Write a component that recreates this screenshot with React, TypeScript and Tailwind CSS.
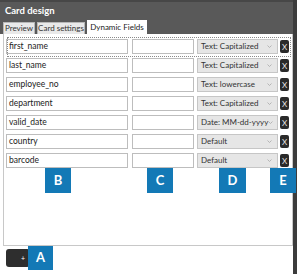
import React, { FC } from "react";

type Field = { name: string; format: string };

const fields: Field[] = [
  { name: "first_name", format: "Text: Capitalized" },
  { name: "last_name", format: "Text: Capitalized" },
  { name: "employee_no", format: "Text: lowercase" },
  { name: "department", format: "Text: Capitalized" },
  { name: "valid_date", format: "Date: MM-dd-yyyy" },
  { name: "country", format: "Default" },
  { name: "barcode", format: "Default" },
];

const Marker: FC<{ label: string; className: string }> = ({ label, className }) => (
  <div
    className={`absolute flex items-center justify-center bg-[#1379b6] text-white font-bold text-[13px] ${className}`}
  >
    {label}
  </div>
);

const FieldRow: FC<{ field: Field; focused?: boolean }> = ({ field, focused }) => (
  <div className="relative flex items-center h-[15px]">
    {focused && (
      <div className="absolute left-[1px] right-[1px] top-[-2px] bottom-[-3px] border border-dotted border-[#8a8a8a]" />
    )}
    <div className="w-[122px] h-[15px] border border-[#bdbdbd] bg-white px-[2px] text-[8.5px] leading-[13px] text-[#222] whitespace-nowrap">
      {field.name}
    </div>
    <div className="ml-[4px] w-[62px] h-[15px] border border-[#bdbdbd] bg-white" />
    <div className="ml-[3px] w-[81px] h-[15px] border border-[#c6c6c6] bg-[#e6e6e6] flex items-center justify-between pl-[3px] pr-[5px] text-[8px] text-[#333] whitespace-nowrap">
      <span className="leading-[13px]">{field.format}</span>
      <svg width="5" height="3" viewBox="0 0 5 3" className="shrink-0">
        <path d="M0.5 0.5 L2.5 2.5 L4.5 0.5" fill="none" stroke="#a8a8a8" strokeWidth="0.8" />
      </svg>
    </div>
    <div className="ml-[2px] w-[9px] h-[13px] rounded-[2px] bg-[#2a2a2a] flex items-center justify-center text-[8px] leading-none text-[#e8e8e8]">
      X
    </div>
  </div>
);

export default function App() {
  return (
    <div
      className="relative w-[300px] h-[274px] bg-white overflow-hidden flex"
      style={{ fontFamily: 'Lato, "Liberation Sans", sans-serif' }}
    >
      <div className="w-[293px] flex flex-col">
        {/* header */}
        <div className="h-[20px] bg-[#595959] border-t-[2px] border-[#474747] px-[5px] flex items-center">
          <span className="text-white font-bold text-[9.5px] leading-none">Card design</span>
        </div>
        {/* tabs */}
        <div className="h-[14px] bg-[#595959] flex items-end pl-[3px] gap-[2px]">
          <div className="w-[32px] h-[12px] bg-[#e9e9e9] border border-b-0 border-[#b8b8b8] text-[8px] leading-[11px] text-[#333] whitespace-nowrap text-center">
            Preview
          </div>
          <div className="w-[48px] h-[12px] bg-[#e9e9e9] border border-b-0 border-[#b8b8b8] text-[8px] leading-[11px] text-[#333] whitespace-nowrap text-center">
            Card settings
          </div>
          <div className="w-[60px] h-[14px] bg-white text-[8px] leading-[14px] text-[#222] whitespace-nowrap text-center">
            Dynamic Fields
          </div>
        </div>
        {/* fields */}
        <div className="ml-[3px] h-[212px] border border-t-0 border-[#c8c8c8] bg-white pt-[5px] pl-[2px] flex flex-col gap-[4px]">
          {fields.map((f, i) => (
            <FieldRow key={f.name} field={f} focused={i === 0} />
          ))}
        </div>
        {/* footer */}
        <div className="flex-1 pl-[6px] pt-[3px]">
          <div className="w-[24px] h-[18px] rounded-[3px] bg-[#2e2e2e] flex items-center justify-end pr-[5px] text-white text-[7px] leading-none">
            +
          </div>
        </div>
      </div>
      <div className="w-[4px] bg-[#3c3c3c]" />
      <div className="flex-1 bg-white" />

      <Marker label="B" className="left-[45px] top-[168px] w-[26px] h-[25px]" />
      <Marker label="C" className="left-[147px] top-[168px] w-[26px] h-[25px]" />
      <Marker label="D" className="left-[219px] top-[168px] w-[27px] h-[25px]" />
      <Marker label="E" className="left-[270px] top-[168px] w-[26px] h-[25px]" />
      <Marker label="A" className="left-[28px] top-[246px] w-[25px] h-[24px]" />
    </div>
  );
}
